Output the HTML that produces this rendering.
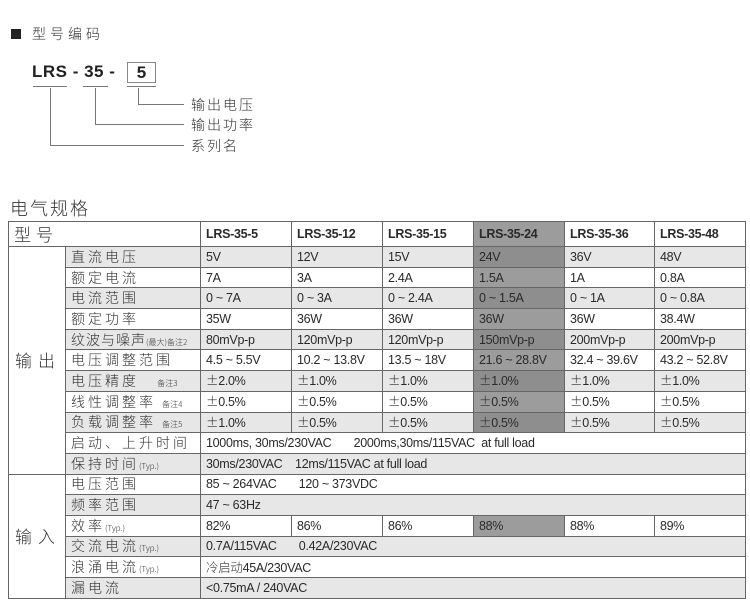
<!DOCTYPE html>
<html><head><meta charset="utf-8"><style>
body{margin:0;width:750px;height:600px;background:#fff;position:relative;overflow:hidden;font-family:"Liberation Sans","Noto Sans CJK SC",sans-serif;color:#222}
.a{position:absolute;white-space:nowrap}
.cj{font-family:"Noto Sans CJK SC",sans-serif;font-weight:300;color:#333}
table{position:absolute;left:8px;top:221px;border-collapse:collapse;table-layout:fixed;width:737px}
tr{height:20.7px}
td{border:1px solid #666;padding:0 0 0 5px;font-size:12.5px;height:20px;max-height:20px;white-space:nowrap;overflow:hidden;letter-spacing:-0.3px;line-height:18px;vertical-align:middle;box-sizing:border-box;color:#2a2a2a}
tr.g td{background:#e7e7e7}
td.h{background:#9c9c9c!important}
tr.g td.h{background:#8e8e8e!important}
td.l{font-family:"Noto Sans CJK SC",sans-serif;font-weight:300;font-size:14px;letter-spacing:3px;color:#333;padding-left:5px;line-height:18px}
td.l small{font-size:8px;letter-spacing:0;line-height:10px}
td.grp{background:#fff!important;font-family:"Noto Sans CJK SC",sans-serif;font-weight:300;font-size:17px;letter-spacing:6px;color:#333;padding-left:6px}
tr.hd{height:25px}
tr.hd td{height:25px;font-weight:bold;font-size:12.5px}
.pm{font-family:"Noto Sans CJK SC",sans-serif;font-weight:300}
.ln{position:absolute;background:#777}
</style></head><body>
<div class="a" style="left:11px;top:29px;width:10px;height:10px;background:#222"></div>
<div class="a cj" style="left:32px;top:24px;font-size:14px;letter-spacing:4px">型号编码</div>
<div class="a" style="left:32px;top:62px;font-size:17px;font-weight:bold;letter-spacing:0.5px">LRS - 35 -</div>
<div class="a" style="left:127px;top:62px;width:27px;height:19px;border:1px solid #888;font-size:17px;font-weight:bold;text-align:center;line-height:19px">5</div>
<div class="ln" style="left:33px;top:86px;width:34px;height:1px"></div>
<div class="ln" style="left:83px;top:86px;width:25px;height:1px"></div>
<div class="ln" style="left:127px;top:86px;width:29px;height:1px"></div>
<div class="ln" style="left:50px;top:88px;width:1px;height:58px"></div>
<div class="ln" style="left:95px;top:88px;width:1px;height:37px"></div>
<div class="ln" style="left:138px;top:88px;width:1px;height:16px"></div>
<div class="ln" style="left:50px;top:145px;width:134px;height:1px"></div>
<div class="ln" style="left:95px;top:124px;width:89px;height:1px"></div>
<div class="ln" style="left:138px;top:104px;width:46px;height:1px"></div>
<div class="a cj" style="left:191px;top:95px;font-size:14px;letter-spacing:2px">输出电压</div>
<div class="a cj" style="left:191px;top:115px;font-size:14px;letter-spacing:2px">输出功率</div>
<div class="a cj" style="left:191px;top:136px;font-size:14px;letter-spacing:2px">系列名</div>
<div class="a cj" style="left:10px;top:195px;font-size:18px;letter-spacing:2px">电气规格</div>
<table>
<colgroup><col style="width:57px"><col style="width:135px"><col style="width:91px"><col style="width:91px"><col style="width:91px"><col style="width:91px"><col style="width:90px"><col style="width:91px"></colgroup>
<tr class="hd"><td colspan="2" class="l" style="font-size:17px;font-weight:300;letter-spacing:5px">型号</td><td>LRS-35-5</td><td>LRS-35-12</td><td>LRS-35-15</td><td class="h">LRS-35-24</td><td>LRS-35-36</td><td>LRS-35-48</td></tr>
<tr class="g"><td rowspan="11" class="grp">输出</td><td class="l">直流电压</td><td>5V</td><td>12V</td><td>15V</td><td class="h">24V</td><td>36V</td><td>48V</td></tr>
<tr><td class="l">额定电流</td><td>7A</td><td>3A</td><td>2.4A</td><td class="h">1.5A</td><td>1A</td><td>0.8A</td></tr>
<tr class="g"><td class="l">电流范围</td><td>0 ~ 7A</td><td>0 ~ 3A</td><td>0 ~ 2.4A</td><td class="h">0 ~ 1.5A</td><td>0 ~ 1A</td><td>0 ~ 0.8A</td></tr>
<tr><td class="l">额定功率</td><td>35W</td><td>36W</td><td>36W</td><td class="h">36W</td><td>36W</td><td>38.4W</td></tr>
<tr class="g"><td class="l" style="letter-spacing:1px">纹波与噪声<small>(最大)备注2</small></td><td>80mVp-p</td><td>120mVp-p</td><td>120mVp-p</td><td class="h">150mVp-p</td><td>200mVp-p</td><td>200mVp-p</td></tr>
<tr><td class="l">电压调整范围</td><td>4.5 ~ 5.5V</td><td>10.2 ~ 13.8V</td><td>13.5 ~ 18V</td><td class="h">21.6 ~ 28.8V</td><td>32.4 ~ 39.6V</td><td>43.2 ~ 52.8V</td></tr>
<tr class="g"><td class="l">电压精度 &nbsp; <small>备注3</small></td><td><span class="pm">±</span>2.0%</td><td><span class="pm">±</span>1.0%</td><td><span class="pm">±</span>1.0%</td><td class="h"><span class="pm">±</span>1.0%</td><td><span class="pm">±</span>1.0%</td><td><span class="pm">±</span>1.0%</td></tr>
<tr><td class="l">线性调整率 <small>备注4</small></td><td><span class="pm">±</span>0.5%</td><td><span class="pm">±</span>0.5%</td><td><span class="pm">±</span>0.5%</td><td class="h"><span class="pm">±</span>0.5%</td><td><span class="pm">±</span>0.5%</td><td><span class="pm">±</span>0.5%</td></tr>
<tr class="g"><td class="l">负载调整率 <small>备注5</small></td><td><span class="pm">±</span>1.0%</td><td><span class="pm">±</span>0.5%</td><td><span class="pm">±</span>0.5%</td><td class="h"><span class="pm">±</span>0.5%</td><td><span class="pm">±</span>0.5%</td><td><span class="pm">±</span>0.5%</td></tr>
<tr><td class="l">启动、上升时间</td><td colspan="6">1000ms, 30ms/230VAC &nbsp; &nbsp; &nbsp; 2000ms,30ms/115VAC &nbsp;at full load</td></tr>
<tr class="g"><td class="l">保持时间<small>(Typ.)</small></td><td colspan="6">30ms/230VAC &nbsp; &nbsp;12ms/115VAC at full load</td></tr>
<tr><td rowspan="6" class="grp">输入</td><td class="l">电压范围</td><td colspan="6">85 ~ 264VAC &nbsp; &nbsp; &nbsp; 120 ~ 373VDC</td></tr>
<tr class="g"><td class="l">频率范围</td><td colspan="6">47 ~ 63Hz</td></tr>
<tr><td class="l">效率<small>(Typ.)</small></td><td>82%</td><td>86%</td><td>86%</td><td class="h">88%</td><td>88%</td><td>89%</td></tr>
<tr class="g"><td class="l">交流电流<small>(Typ.)</small></td><td colspan="6">0.7A/115VAC &nbsp; &nbsp; &nbsp; 0.42A/230VAC</td></tr>
<tr><td class="l">浪涌电流<small>(Typ.)</small></td><td colspan="6"><span class="cj">冷启动</span>45A/230VAC</td></tr>
<tr class="g"><td class="l">漏电流</td><td colspan="6">&lt;0.75mA / 240VAC</td></tr>
</table>
</body></html>
